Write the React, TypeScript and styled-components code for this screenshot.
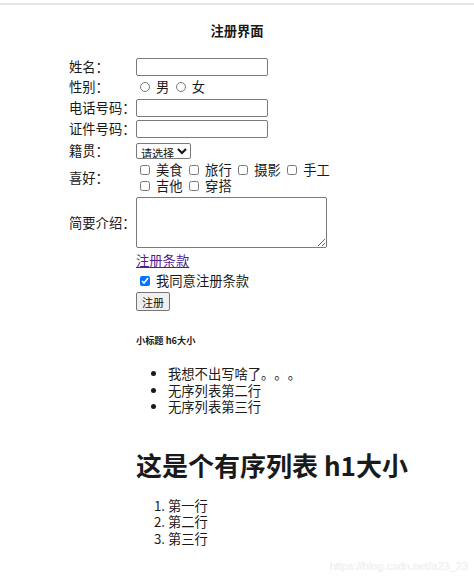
import React from 'react'
import styled, { createGlobalStyle } from 'styled-components'

const GlobalStyle = createGlobalStyle`
  html, body {
    margin: 0;
    padding: 0;
    background: #ffffff;
  }
  body {
    font-family: "Microsoft YaHei", "Noto Sans CJK SC", "Noto Sans", sans-serif;
    color: #1a1a1a;
    text-spacing-trim: space-all;
  }
`

const Page = styled.div`
  position: relative;
  width: 474px;
  height: 578px;
  overflow: hidden;
`

const TopRule = styled.div`
  margin-top: 3px;
  height: 2px;
  background: #e4e4e4;
`

const Title = styled.h3`
  margin: 18px 0 0;
  text-align: center;
  font-size: 13.3px;
  line-height: 16px;
  font-weight: 700;
`

const Form = styled.form`
  margin: 18px 0 0 69px;
  display: flex;
  flex-direction: column;
`

const Row = styled.div<{ $h: number }>`
  display: flex;
  align-items: center;
  height: ${p => p.$h}px;
`

const Label = styled.span`
  width: 67px;
  flex-shrink: 0;
  font-size: 13.3px;
  line-height: 16px;
`

const Field = styled.div`
  display: flex;
  flex-direction: column;
`

const Line = styled.div`
  display: flex;
  align-items: center;
  height: 16px;
  font-size: 13.3px;
`

const TextInput = styled.input`
  box-sizing: border-box;
  width: 132px;
  height: 18px;
  margin: 0;
  padding: 0 2px;
  border: 1px solid #7a7a7a;
  border-radius: 2px;
  font-size: 11px;
`

const Mark = styled.input`
  width: 10px;
  height: 10px;
  margin: 0 6px 0 4px;
  flex-shrink: 0;
`

const Choice = styled.span`
  margin-right: 2.5px;
  line-height: 16px;
`

const Select = styled.select`
  height: 16px;
  margin: 0;
  padding: 0;
  font-size: 11px;
  font-family: inherit;
  border: 1px solid #7a7a7a;
  border-radius: 2px;
  background: #fff;
  color: #111;
`

const Intro = styled.textarea`
  box-sizing: border-box;
  width: 191px;
  height: 51px;
  margin: 0;
  border: 1px solid #7a7a7a;
  border-radius: 2px;
`

const Terms = styled.a`
  font-size: 13.3px;
  line-height: 16px;
  color: #551a8b;
  text-decoration: underline;
`

const SubmitButton = styled.button`
  box-sizing: border-box;
  height: 19px;
  padding: 0 5px;
  font-size: 11px;
  font-family: inherit;
  background: #efefef;
  border: 1px solid #767676;
  border-radius: 2px;
  color: #111;
`

const Content = styled.div`
  margin-left: 136px;
`

const SmallHeading = styled.h6`
  margin: 21px 0 20px;
  font-size: 9.2px;
  line-height: 12px;
  font-weight: 700;
`

const List = styled.ul`
  margin: 0;
  padding-left: 32px;
  font-size: 13.3px;
  line-height: 16.6px;
`

const OrderedList = styled.ol`
  margin: 17px 0 0;
  padding-left: 32px;
  font-size: 13.3px;
  line-height: 16.6px;
`

const BigHeading = styled.h1`
  margin: 33px 0 0;
  font-size: 26px;
  line-height: 32px;
  font-weight: 700;
`

const Watermark = styled.div`
  position: absolute;
  right: 6px;
  bottom: 6px;
  font-family: "Liberation Sans", Arial, sans-serif;
  font-size: 11px;
  color: #f4f4f4;
  text-shadow: 0 0 1px #e6e6e6;
`

const hobbies = [
  ['美食', '旅行', '摄影', '手工'],
  ['吉他', '穿搭'],
]

export default function App() {
  return (
    <Page>
      <GlobalStyle />
      <TopRule />
      <Title>注册界面</Title>
      <Form onSubmit={e => e.preventDefault()}>
        <Row $h={20}>
          <Label>姓名：</Label>
          <TextInput type="text" />
        </Row>
        <Row $h={20}>
          <Label>性别：</Label>
          <Line>
            <Mark type="radio" name="sex" />
            <Choice>男</Choice>
            <Mark type="radio" name="sex" />
            <Choice>女</Choice>
          </Line>
        </Row>
        <Row $h={21}>
          <Label>电话号码：</Label>
          <TextInput type="text" />
        </Row>
        <Row $h={22}>
          <Label>证件号码：</Label>
          <TextInput type="text" />
        </Row>
        <Row $h={21}>
          <Label>籍贯：</Label>
          <Select defaultValue="">
            <option value="">请选择</option>
            <option value="bj">北京</option>
            <option value="sh">上海</option>
          </Select>
        </Row>
        <Row $h={34}>
          <Label>喜好：</Label>
          <Field>
            {hobbies.map((line, i) => (
              <Line key={i}>
                {line.map(h => (
                  <React.Fragment key={h}>
                    <Mark type="checkbox" />
                    <Choice>{h}</Choice>
                  </React.Fragment>
                ))}
              </Line>
            ))}
          </Field>
        </Row>
        <Row $h={55}>
          <Label>简要介绍：</Label>
          <Intro />
        </Row>
        <Row $h={21}>
          <Label />
          <Terms href="#">注册条款</Terms>
        </Row>
        <Row $h={19}>
          <Label />
          <Line>
            <Mark type="checkbox" defaultChecked />
            <Choice>我同意注册条款</Choice>
          </Line>
        </Row>
        <Row $h={23}>
          <Label />
          <SubmitButton type="submit">注册</SubmitButton>
        </Row>
      </Form>
      <Content>
        <SmallHeading>小标题 h6大小</SmallHeading>
        <List>
          <li>我想不出写啥了。。。</li>
          <li>无序列表第二行</li>
          <li>无序列表第三行</li>
        </List>
        <BigHeading>这是个有序列表 h1大小</BigHeading>
        <OrderedList>
          <li>第一行</li>
          <li>第二行</li>
          <li>第三行</li>
        </OrderedList>
      </Content>
      <Watermark>https://blog.csdn.net/a23_23</Watermark>
    </Page>
  )
}
